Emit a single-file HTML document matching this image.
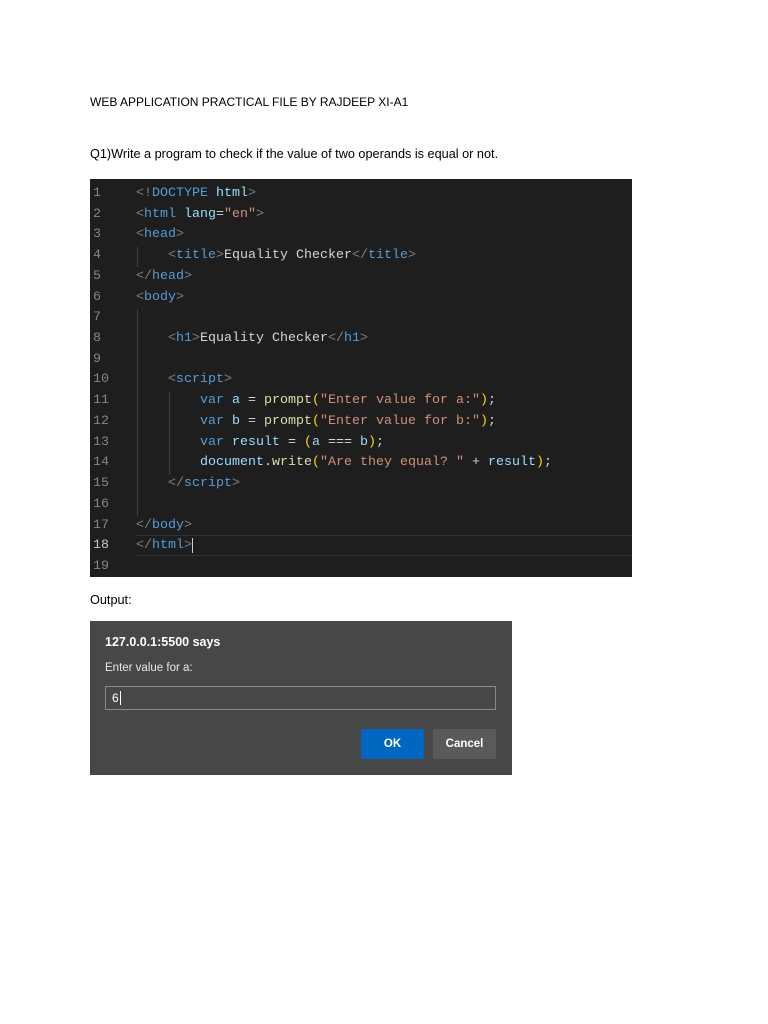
<!DOCTYPE html>
<html><head><style>
body{margin:0;width:768px;height:1024px;background:#fff;position:relative;font-family:"Liberation Sans",sans-serif;}
.t{position:absolute;left:90px;color:#000;white-space:nowrap}
#code{position:absolute;left:90px;top:179px;width:542px;height:398px;background:#1e1e1e;overflow:hidden}
.ln{position:absolute;left:3px;width:30px;font-family:"Liberation Mono",monospace;font-size:13.33px;color:#858585;line-height:20.72px}
.cl{position:absolute;left:46px;font-family:"Liberation Mono",monospace;font-size:13.33px;color:#d4d4d4;line-height:20.72px;white-space:pre}
.g{color:#808080}.b{color:#569cd6}.a{color:#9cdcfe}.s{color:#ce9178}.f{color:#dcdcaa}.y{color:#ffd700}
.guide{position:absolute;width:1px;background:#404040}
#dlg{position:absolute;left:90px;top:621px;width:422px;height:154px;background:#474747}
</style></head><body>
<div class="t" style="top:95px;font-size:12px">WEB APPLICATION PRACTICAL FILE BY RAJDEEP XI-A1</div>
<div class="t" style="top:147px;font-size:12.7px">Q1)Write a program to check if the value of two operands is equal or not.</div>
<div id="code">
<div class="guide" style="left:47px;top:68px;height:20px"></div>
<div class="guide" style="left:47px;top:130px;height:207px"></div>
<div class="guide" style="left:79px;top:213px;height:83px"></div>
<div style="position:absolute;left:46px;top:356px;width:500px;height:19px;border-top:1px solid #333;border-bottom:1px solid #333"></div>
<div class="ln" style="top:5px">1<br>2<br>3<br>4<br>5<br>6<br>7<br>8<br>9<br>10<br>11<br>12<br>13<br>14<br>15<br>16<br>17<br><span style="color:#c6c6c6">18</span><br>19</div>
<div class="cl" style="top:5px"><span class="g">&lt;!</span><span class="b">DOCTYPE</span> <span class="a">html</span><span class="g">&gt;</span>
<span class="g">&lt;</span><span class="b">html</span> <span class="a">lang</span>=<span class="s">"en"</span><span class="g">&gt;</span>
<span class="g">&lt;</span><span class="b">head</span><span class="g">&gt;</span>
    <span class="g">&lt;</span><span class="b">title</span><span class="g">&gt;</span>Equality Checker<span class="g">&lt;/</span><span class="b">title</span><span class="g">&gt;</span>
<span class="g">&lt;/</span><span class="b">head</span><span class="g">&gt;</span>
<span class="g">&lt;</span><span class="b">body</span><span class="g">&gt;</span>

    <span class="g">&lt;</span><span class="b">h1</span><span class="g">&gt;</span>Equality Checker<span class="g">&lt;/</span><span class="b">h1</span><span class="g">&gt;</span>

    <span class="g">&lt;</span><span class="b">script</span><span class="g">&gt;</span>
        <span class="b">var</span> <span class="a">a</span> = <span class="f">prompt</span><span class="y">(</span><span class="s">"Enter value for a:"</span><span class="y">)</span>;
        <span class="b">var</span> <span class="a">b</span> = <span class="f">prompt</span><span class="y">(</span><span class="s">"Enter value for b:"</span><span class="y">)</span>;
        <span class="b">var</span> <span class="a">result</span> = <span class="y">(</span><span class="a">a</span> === <span class="a">b</span><span class="y">)</span>;
        <span class="a">document</span>.<span class="f">write</span><span class="y">(</span><span class="s">"Are they equal? "</span> + <span class="a">result</span><span class="y">)</span>;
    <span class="g">&lt;/</span><span class="b">script</span><span class="g">&gt;</span>

<span class="g">&lt;/</span><span class="b">body</span><span class="g">&gt;</span>
<span class="g">&lt;/</span><span class="b">html</span><span class="g">&gt;</span><span style="border-left:1px solid #ccc"></span>
</div>
</div>
<div class="t" style="top:593px;font-size:12.7px">Output:</div>
<div id="dlg">
<div style="position:absolute;left:15px;top:14px;color:#fff;font-weight:bold;font-size:12.5px">127.0.0.1:5500 says</div>
<div style="position:absolute;left:15px;top:41px;color:#e8e8e8;font-size:11.5px">Enter value for a:</div>
<div style="position:absolute;left:15px;top:65px;width:383px;height:22px;border:1.5px solid #8a8a8a;color:#fff;font-size:12px;line-height:22px;padding-left:6px;box-sizing:content-box">6<span style="border-left:1px solid #fff;margin-left:1px"></span></div>
<div style="position:absolute;left:271px;top:108px;width:63px;height:30px;background:#0067c0;color:#fff;font-weight:bold;font-size:11.5px;text-align:center;line-height:30px;border-radius:2px">OK</div>
<div style="position:absolute;left:343px;top:108px;width:63px;height:30px;background:#5a5a5a;color:#fff;font-weight:bold;font-size:11.5px;text-align:center;line-height:30px;border-radius:2px">Cancel</div>
</div>
</body></html>
